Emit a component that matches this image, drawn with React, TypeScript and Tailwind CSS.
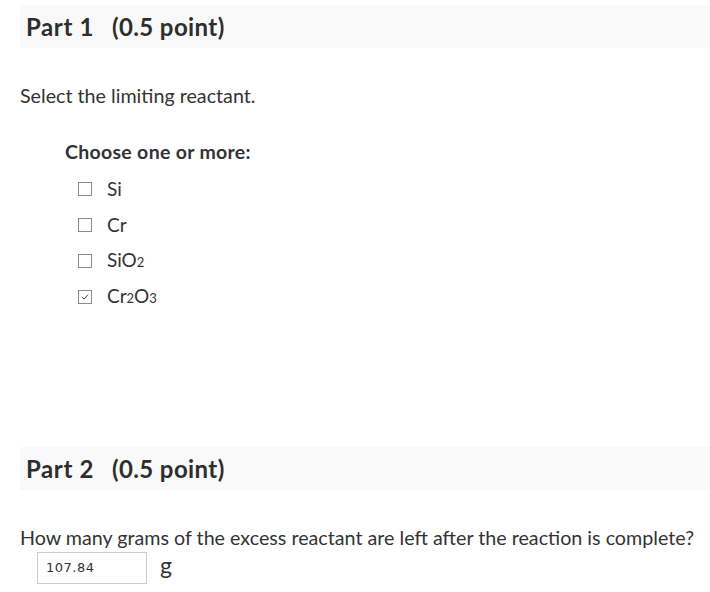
import React from "react";

const Box = ({ checked }: { checked?: boolean }) => (
  <span className="inline-flex h-[14px] w-[14px] items-center justify-center border border-[#8a8a8a] bg-white">
    {checked && (
      <svg width="10" height="10" viewBox="0 0 10 10">
        <path d="M2 5 L4.1 7.1 L8 2.7" fill="none" stroke="#8b2a2a" strokeWidth="1" />
      </svg>
    )}
  </span>
);

export default function App() {
  const opts: { label: React.ReactNode; checked?: boolean }[] = [
    { label: "Si" },
    { label: "Cr" },
    { label: <>SiO<span className="text-[13px]">2</span></> },
    { label: <>Cr<span className="text-[13px]">2</span>O<span className="text-[13px]">3</span></>, checked: true },
  ];
  return (
    <div className="w-[710px] h-[592px] bg-white text-[#333] overflow-hidden" style={{ fontFamily: "Lato, 'Noto Sans', sans-serif" }}>
      <div className="pt-[5px] pl-[20px]">
        <div className="h-[43px] bg-[#f9f9f9] flex items-center pl-[6px]">
          <span className="text-[24px] font-bold text-[#2e2e2e] tracking-[0.6px]">Part 1</span>
          <span className="text-[24px] font-bold text-[#2e2e2e] ml-[18px] tracking-[0.4px]">(0.5 point)</span>
        </div>
      </div>
      <div className="pl-[20px] mt-[37px] text-[19.7px] leading-[22px] text-[#333]">Select the limiting reactant.</div>
      <div className="pl-[65px] mt-[34px] text-[19.5px] font-bold leading-[22px] text-[#333] tracking-[0.3px]">Choose one or more:</div>
      <div className="pl-[78px] mt-[15px] flex flex-col gap-[14px]">
        {opts.map((o, i) => (
          <div key={i} className="flex items-center h-[22px]">
            <Box checked={o.checked} />
            <span className="ml-[15px] text-[19px] text-[#333] leading-[22px]">{o.label}</span>
          </div>
        ))}
      </div>
      <div className="pt-[139px] pl-[20px]">
        <div className="h-[43px] bg-[#f9f9f9] flex items-center pl-[6px]">
          <span className="text-[24px] font-bold text-[#2e2e2e] tracking-[0.6px]">Part 2</span>
          <span className="text-[24px] font-bold text-[#2e2e2e] ml-[18px] tracking-[0.4px]">(0.5 point)</span>
        </div>
      </div>
      <div className="pl-[20px] mt-[37px] text-[19.7px] leading-[22px] text-[#333]">How many grams of the excess reactant are left after the reaction is complete?</div>
      <div className="pl-[37px] mt-[3px] flex items-center">
        <div className="w-[110px] h-[32px] border border-[#ccc] flex items-center pl-[8px] text-[13px] text-[#333]" style={{ fontFamily: "'DejaVu Sans', sans-serif", letterSpacing: "0.5px" }}>107.84</div>
        <span className="ml-[13px] text-[23px] text-[#333] leading-[22px] -mt-[6px]">g</span>
      </div>
    </div>
  );
}
